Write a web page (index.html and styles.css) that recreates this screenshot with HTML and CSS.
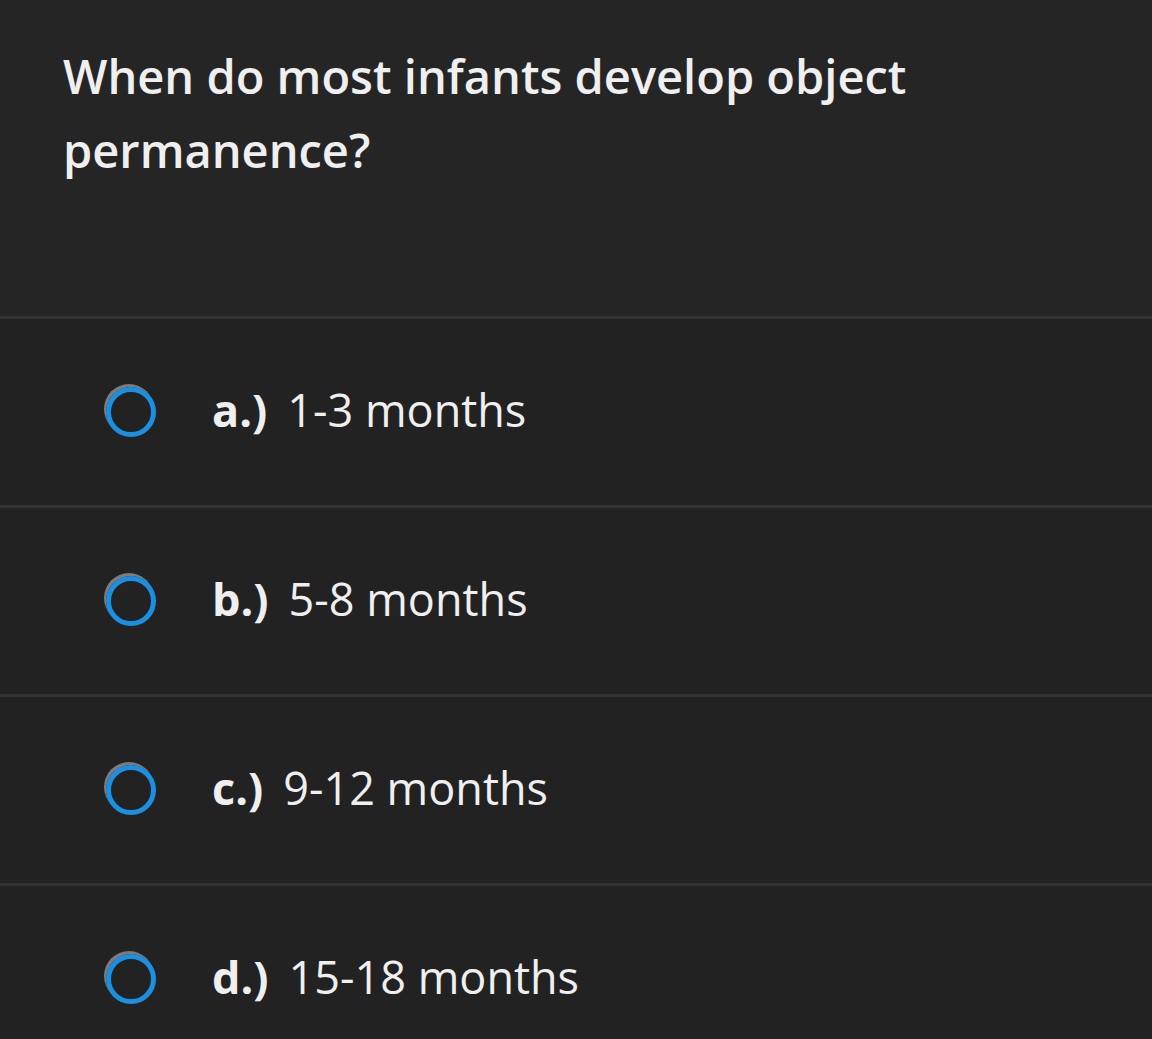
FILE: index.html
```html
<!DOCTYPE html>
<html>
<head>
<meta charset="utf-8">
<link rel="stylesheet" href="styles.css">
</head>
<body>
<div class="quiz">
  <div class="question">When do most infants develop object permanence?</div>
  <div class="options">
    <div class="option"><span class="radio"></span><span class="label">a.)</span><span class="answer">1-3 months</span></div>
    <div class="option"><span class="radio"></span><span class="label">b.)</span><span class="answer">5-8 months</span></div>
    <div class="option"><span class="radio"></span><span class="label">c.)</span><span class="answer">9-12 months</span></div>
    <div class="option"><span class="radio"></span><span class="label">d.)</span><span class="answer">15-18 months</span></div>
  </div>
</div>
</body>
</html>
```
FILE: styles.css
```css
html, body {
  margin: 0;
  padding: 0;
  background: #222222;
}
.quiz {
  font-family: "Open Sans", Lato, sans-serif;
  color: #efefef;
}
.question {
  background: #252525;
  height: 316px;
  box-sizing: border-box;
  padding: 39px 200px 0 63px;
  font-size: 47px;
  line-height: 74px;
  font-weight: 600;
}
.option {
  display: flex;
  align-items: center;
  height: 186px;
  box-sizing: content-box;
  border-top: 3px solid #323232;
  padding-left: 105px;
  font-size: 45px;
}
.radio {
  width: 50px;
  height: 50px;
  box-sizing: border-box;
  border-radius: 50%;
  border: 5px solid #1b8fe2;
  box-shadow: -2px -3px 0 0 #7c7c7c;
  margin-right: 56px;
  margin-left: 1px;
  flex: none;
}
.label {
  font-weight: 700;
  margin-right: 20px;
  margin-bottom: 6px;
}
.answer {
  font-weight: 400;
  margin-bottom: 6px;
}
```
